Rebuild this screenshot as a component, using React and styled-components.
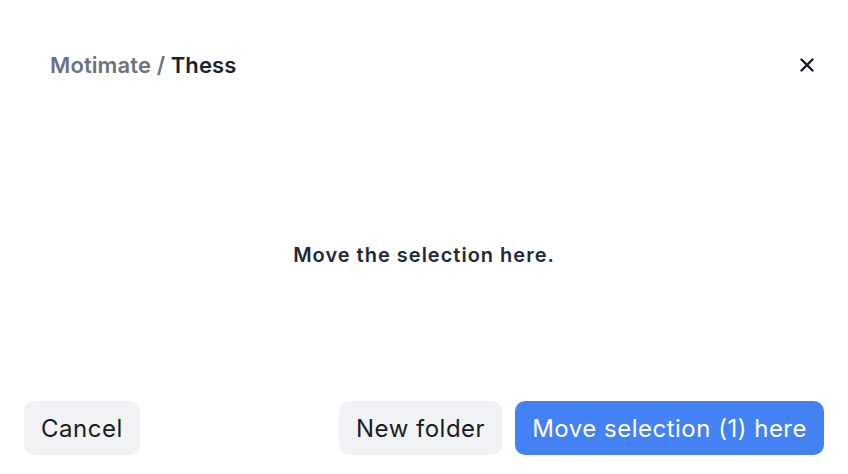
import React from "react";
import styled, { createGlobalStyle } from "styled-components";

const Global = createGlobalStyle`
  html, body {
    margin: 0;
    padding: 0;
    background: #ffffff;
    font-family: Inter, "Noto Sans", sans-serif;
  }
`;

const Dialog = styled.div`
  width: 100vw;
  height: 100vh;
  display: flex;
  flex-direction: column;
  box-sizing: border-box;
  padding: 52px 24px 19px 24px;
`;

const Header = styled.div`
  display: flex;
  align-items: center;
  justify-content: space-between;
  padding: 0 5px 0 26px;
  height: 26px;
`;

const Crumbs = styled.div`
  font-size: 22px;
  font-weight: 600;
  color: #1a2233;
  letter-spacing: 0.1px;
`;

const Parent = styled.span`
  color: #6b7280;
`;

const CloseButton = styled.button`
  border: 0;
  background: none;
  padding: 0;
  width: 24px;
  height: 24px;
  display: flex;
  align-items: center;
  justify-content: center;
  color: #111827;
  cursor: pointer;
`;

const Body = styled.div`
  flex: 1;
  display: flex;
  align-items: center;
  justify-content: center;
  font-size: 20px;
  font-weight: 600;
  letter-spacing: 1px;
  color: #1f2937;
  padding-top: 30px;
`;

const Footer = styled.div`
  display: flex;
  align-items: center;
  gap: 13px;
`;

const Spacer = styled.div`
  flex: 1;
`;

const Button = styled.button`
  height: 54px;
  border: 0;
  border-radius: 10px;
  padding: 0 17px;
  font-family: Inter, "Noto Sans", sans-serif;
  font-size: 24px;
  font-weight: 400;
  letter-spacing: 0.5px;
  background: ${(p) => (p.$primary ? "#4481f5" : "#f1f2f5")};
  color: ${(p) => (p.$primary ? "#ffffff" : "#1c1c1e")};
  cursor: pointer;
`;

export default function App() {
  return (
    <>
      <Global />
      <Dialog>
        <Header>
          <Crumbs>
            <Parent>Motimate / </Parent>Thess
          </Crumbs>
          <CloseButton aria-label="Close">
            <svg width="14" height="14" viewBox="0 0 14 14">
              <path d="M1.5 1.5 L12.5 12.5 M12.5 1.5 L1.5 12.5" stroke="currentColor" strokeWidth="2.4" strokeLinecap="round" />
            </svg>
          </CloseButton>
        </Header>
        <Body>Move the selection here.</Body>
        <Footer>
          <Button>Cancel</Button>
          <Spacer />
          <Button>New folder</Button>
          <Button $primary>Move selection (1) here</Button>
        </Footer>
      </Dialog>
    </>
  );
}
